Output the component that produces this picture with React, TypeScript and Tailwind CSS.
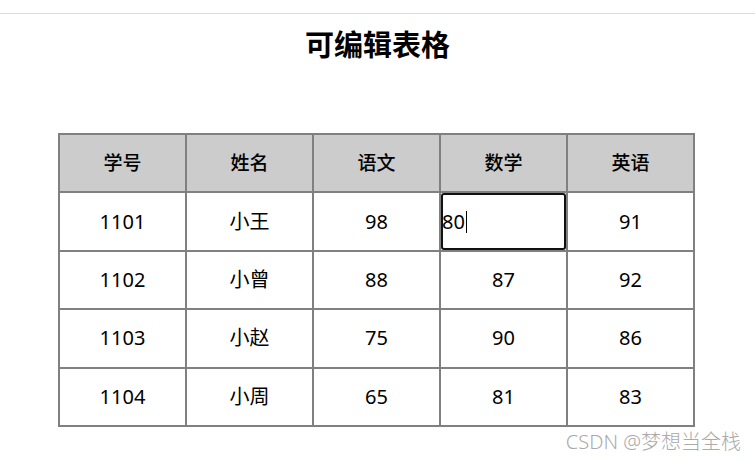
const headers = ['学号', '姓名', '语文', '数学', '英语']

const rows = [
  ['1101', '小王', '98', '80', '91'],
  ['1102', '小曾', '88', '87', '92'],
  ['1103', '小赵', '75', '90', '86'],
  ['1104', '小周', '65', '81', '83'],
]

export default function App() {
  return (
    <div
      className="min-h-screen w-full bg-white text-black"
      style={{ fontFamily: '"Noto Sans", "Noto Sans CJK SC", sans-serif' }}
    >
      <div className="h-[13px]" />
      <div className="h-px w-full bg-[#dadada]" />

      <h1 className="mt-[13px] text-center text-[29px] font-bold leading-[36px]">
        可编辑表格
      </h1>

      {/* Table */}
      <div className="ml-[58px] mt-[70px] grid w-[637px] grid-cols-5 border border-[#808080]">
        {headers.map((h) => (
          <div
            key={h}
            className="flex h-[58.4px] items-center justify-center border border-[#808080] bg-[#cccccc] text-[19px] font-medium"
          >
            {h}
          </div>
        ))}

        {rows.map((row, r) =>
          row.map((cell, c) => {
            const editing = r === 0 && c === 3
            return (
              <div
                key={`${r}-${c}`}
                className="flex h-[58.4px] items-center justify-center border border-[#808080] text-[20px]"
              >
                {editing ? (
                  <div className="flex h-full w-full items-center rounded-[3px] border-2 border-[#111111] bg-white">
                    <span className="-ml-[1px] leading-none">{cell}</span>
                    <span className="ml-[1px] h-[22px] w-px bg-black" />
                  </div>
                ) : (
                  cell
                )}
              </div>
            )
          })
        )}
      </div>

      <div className="mt-[4px] flex justify-end pr-[14px] text-[20px] font-light leading-[22px] text-[#aaaaaa]">
        CSDN @梦想当全栈
      </div>
    </div>
  )
}
